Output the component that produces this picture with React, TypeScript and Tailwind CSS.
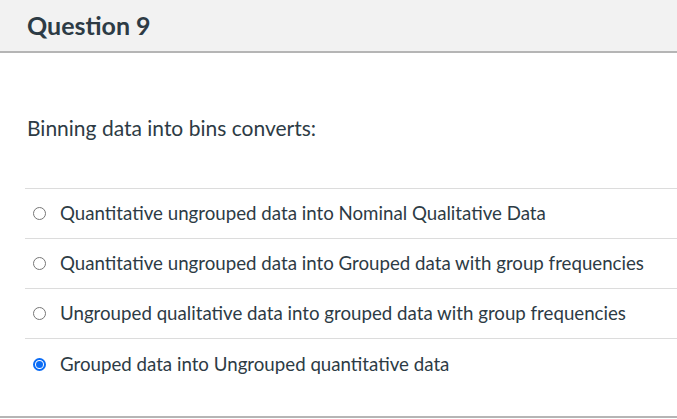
import React from 'react'

const answers = [
  'Quantitative ungrouped data into Nominal Qualitative Data',
  'Quantitative ungrouped data into Grouped data with group frequencies',
  'Ungrouped qualitative data into grouped data with group frequencies',
  'Grouped data into Ungrouped quantitative data',
]

function Radio({ checked }: { checked: boolean }) {
  if (checked) {
    return (
      <span className="flex h-[13px] w-[13px] shrink-0 items-center justify-center rounded-full border-2 border-[#0b6cf5] bg-white">
        <span className="h-[7px] w-[7px] rounded-full bg-[#0b6cf5]" />
      </span>
    )
  }
  return <span className="h-[13px] w-[13px] shrink-0 rounded-full border-[1.3px] border-[#767676] bg-white" />
}

export default function App() {
  return (
    <div className="h-[419px] w-[677px] bg-white font-['Lato',sans-serif] text-[#2d3b45]">
      <div className="flex h-[53px] items-center border-b-2 border-[#b5b5b5] bg-[#f2f2f2] px-[27px]">
        <h2 className="text-[25px] font-bold">Question 9</h2>
      </div>
      <div className="flex h-[135px] items-center px-[27px] pt-[14px]">
        <p className="text-[21px]">Binning data into bins converts:</p>
      </div>
      <ul className="ml-[25px] border-t border-[#dcdcdc]">
        {answers.map((a, i) => (
          <li
            key={i}
            className={`flex h-[50px] items-center gap-[14px] pl-[8px] ${i < 3 ? 'border-b border-[#dcdcdc]' : ''}`}
          >
            <Radio checked={i === 3} />
            <span className="text-[18.7px]">{a}</span>
          </li>
        ))}
      </ul>
      <div className="mt-[27px] border-b-2 border-[#b5b5b5]" />
    </div>
  )
}
